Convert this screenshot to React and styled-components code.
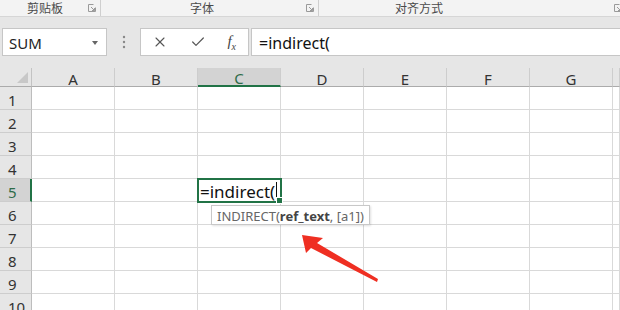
import React from "react";
import styled, { createGlobalStyle } from "styled-components";
import { X, Check } from "lucide-react";

const GlobalStyle = createGlobalStyle`
  html, body {
    margin: 0;
    padding: 0;
    background: #ffffff;
    overflow: hidden;
  }
  body {
    font-family: "Noto Sans", "Noto Sans CJK SC", sans-serif;
  }
`;

const Page = styled.div`
  width: 620px;
  height: 310px;
  overflow: hidden;
  display: flex;
  flex-direction: column;
  background: #fff;
`;

const RibbonLabels = styled.div`
  height: 16px;
  flex-shrink: 0;
  display: flex;
  background: #f3f3f3;
  border-bottom: 1px solid #d6d6d6;
`;

const Group = styled.div`
  width: ${(p) => p.width}px;
  flex-shrink: 0;
  display: flex;
  align-items: center;
  border-right: ${(p) => (p.last ? "none" : "1px solid #cfcfcf")};
  padding-left: ${(p) => p.labelLeft}px;
  box-sizing: border-box;
`;

const GroupLabel = styled.span`
  font-family: "Noto Sans CJK SC", sans-serif;
  font-size: 12px;
  color: #4a4a4a;
  line-height: 16px;
`;

const Launcher = styled.svg`
  margin-left: auto;
  margin-right: ${(p) => p.right}px;
  width: 8px;
  height: 8px;
`;

const FormulaArea = styled.div`
  height: 51px;
  flex-shrink: 0;
  background: #e6e6e6;
  display: flex;
  align-items: flex-start;
  padding-top: 11px;
  padding-left: 2px;
  box-sizing: border-box;
`;

const Box = styled.div`
  height: 28px;
  background: #fff;
  border: 1px solid #c6c6c6;
  box-sizing: border-box;
  display: flex;
  align-items: center;
`;

const NameBox = styled(Box)`
  width: 105px;
  padding: 2px 6px 0;
  justify-content: space-between;
`;

const NameText = styled.span`
  font-size: 15px;
  color: #222;
`;

const Caret = styled.span`
  width: 0;
  height: 0;
  border-left: 3.5px solid transparent;
  border-right: 3.5px solid transparent;
  border-top: 4px solid #666;
  margin-right: 2px;
`;

const Grip = styled.div`
  width: 33px;
  display: flex;
  justify-content: center;
  align-items: center;
  height: 28px;
`;

const IconBox = styled(Box)`
  width: 109px;
  justify-content: space-between;
  padding: 0 12px 0 11px;
  margin-right: 2px;
`;

const Fx = styled.span`
  font-family: "Liberation Serif", serif;
  font-style: italic;
  font-size: 15px;
  color: #444;
  sub {
    font-size: 10px;
  }
`;

const FormulaBox = styled(Box)`
  flex: 1;
  padding: 2px 0 0 7px;
  border-right: none;
`;

const FormulaText = styled.span`
  font-size: 16px;
  color: #111;
`;

const SheetWrap = styled.div`
  position: relative;
  flex: 1;
  min-height: 0;
`;

const Sheet = styled.div`
  display: grid;
  grid-template-columns: 32px repeat(7, 83px) 1fr;
  grid-template-rows: 19px repeat(10, 23px);
`;

const Corner = styled.div`
  background: #e6e6e6;
  border-right: 1px solid #c3c3c3;
  border-bottom: 1px solid #ababab;
  position: relative;
  &::after {
    content: "";
    position: absolute;
    right: 3px;
    bottom: 3px;
    border-left: 11px solid transparent;
    border-bottom: 11px solid #c8c8c8;
  }
`;

const ColHead = styled.div`
  background: ${(p) => (p.active ? "#d3d3d3" : "#e6e6e6")};
  border-right: 1px solid #cdcdcd;
  border-bottom: ${(p) => (p.active ? "2px solid #217346" : "1px solid #ababab")};
  display: flex;
  align-items: center;
  justify-content: center;
  padding-top: 3px;
  font-size: 15px;
  color: ${(p) => (p.active ? "#2e6b48" : "#333")};
  box-sizing: border-box;
`;

const RowHead = styled.div`
  background: ${(p) => (p.active ? "#d3d3d3" : "#e6e6e6")};
  border-right: ${(p) => (p.active ? "2px solid #217346" : "1px solid #bdbdbd")};
  border-bottom: 1px solid #cdcdcd;
  display: flex;
  align-items: center;
  padding: 3px 0 0 8px;
  font-size: 15px;
  color: ${(p) => (p.active ? "#2e6b48" : "#333")};
  box-sizing: border-box;
`;

const Cell = styled.div`
  border-right: 1px solid #d9d9d9;
  border-bottom: 1px solid #d9d9d9;
  position: relative;
`;

const ActiveCell = styled(Cell)`
  outline: 2px solid #217346;
  outline-offset: -1px;
  z-index: 2;
  display: flex;
  align-items: center;
  padding: 2px 0 0 2px;
  font-size: 17px;
  color: #111;
  white-space: nowrap;
`;

const TextCursor = styled.span`
  display: inline-block;
  width: 1px;
  height: 18px;
  background: #111;
  margin-left: 1px;
`;

const FillHandle = styled.span`
  position: absolute;
  right: -3px;
  bottom: -3px;
  width: 5px;
  height: 5px;
  background: #217346;
  border: 1px solid #fff;
`;

const Tooltip = styled.div`
  position: absolute;
  left: 211px;
  top: 137px;
  z-index: 3;
  height: 20px;
  padding: 1px 5px 0;
  display: flex;
  align-items: center;
  background: #fff;
  border: 1px solid #c8c8c8;
  box-shadow: 1px 1px 2px rgba(0, 0, 0, 0.12);
  font-size: 13px;
  color: #666;
  white-space: nowrap;
  box-sizing: border-box;
  b {
    color: #444;
  }
`;

const Arrow = styled.svg`
  position: absolute;
  left: 290px;
  top: 157px;
  z-index: 4;
`;

const cols = ["A", "B", "C", "D", "E", "F", "G", ""];
const rows = [1, 2, 3, 4, 5, 6, 7, 8, 9, 10];

const LauncherIcon = ({ right }) => (
  <Launcher right={right} viewBox="0 0 8 8">
    <path d="M0.5 0.5h5M0.5 0.5v7h7v-4" stroke="#9a9a9a" fill="none" strokeWidth="1" />
    <path d="M3 3l3.5 3.5M6.5 4v2.5H4" stroke="#9a9a9a" fill="none" strokeWidth="1" />
  </Launcher>
);

const App = () => (
  <Page>
    <GlobalStyle />
    <RibbonLabels>
      <Group width={101} labelLeft={27}>
        <GroupLabel>剪贴板</GroupLabel>
        <LauncherIcon right={4} />
      </Group>
      <Group width={218} labelLeft={89}>
        <GroupLabel>字体</GroupLabel>
        <LauncherIcon right={4} />
      </Group>
      <Group width={301} labelLeft={76} last>
        <GroupLabel>对齐方式</GroupLabel>
        <LauncherIcon right={-2} />
      </Group>
    </RibbonLabels>

    <FormulaArea>
      <NameBox>
        <NameText>SUM</NameText>
        <Caret />
      </NameBox>
      <Grip>
        <svg width="4" height="14" viewBox="0 0 4 14">
          <circle cx="2" cy="2" r="1.2" fill="#888" />
          <circle cx="2" cy="7" r="1.2" fill="#888" />
          <circle cx="2" cy="12" r="1.2" fill="#888" />
        </svg>
      </Grip>
      <IconBox>
        <X size={16} color="#555" strokeWidth={1.6} />
        <Check size={16} color="#555" strokeWidth={1.8} />
        <Fx>
          f<sub>x</sub>
        </Fx>
      </IconBox>
      <FormulaBox>
        <FormulaText>=indirect(</FormulaText>
      </FormulaBox>
    </FormulaArea>

    <SheetWrap>
      <Sheet>
        <Corner />
        {cols.map((c, i) => (
          <ColHead key={i} active={c === "C"}>
            {c}
          </ColHead>
        ))}
        {rows.map((r) => (
          <React.Fragment key={r}>
            <RowHead active={r === 5}>{r}</RowHead>
            {cols.map((c, i) =>
              r === 5 && c === "C" ? (
                <ActiveCell key={i}>
                  =indirect(
                  <TextCursor />
                  <FillHandle />
                </ActiveCell>
              ) : (
                <Cell key={i} />
              )
            )}
          </React.Fragment>
        ))}
      </Sheet>

      <Tooltip>
        INDIRECT(<b>ref_text</b>, [a1])
      </Tooltip>

      <Arrow width="100" height="65" viewBox="0 0 100 65">
        <polygon
          points="12,10 33,13 27,18 88,54 87,57 21,23 16,28"
          fill="#ef2f22"
        />
      </Arrow>
    </SheetWrap>
  </Page>
);

export default App;
